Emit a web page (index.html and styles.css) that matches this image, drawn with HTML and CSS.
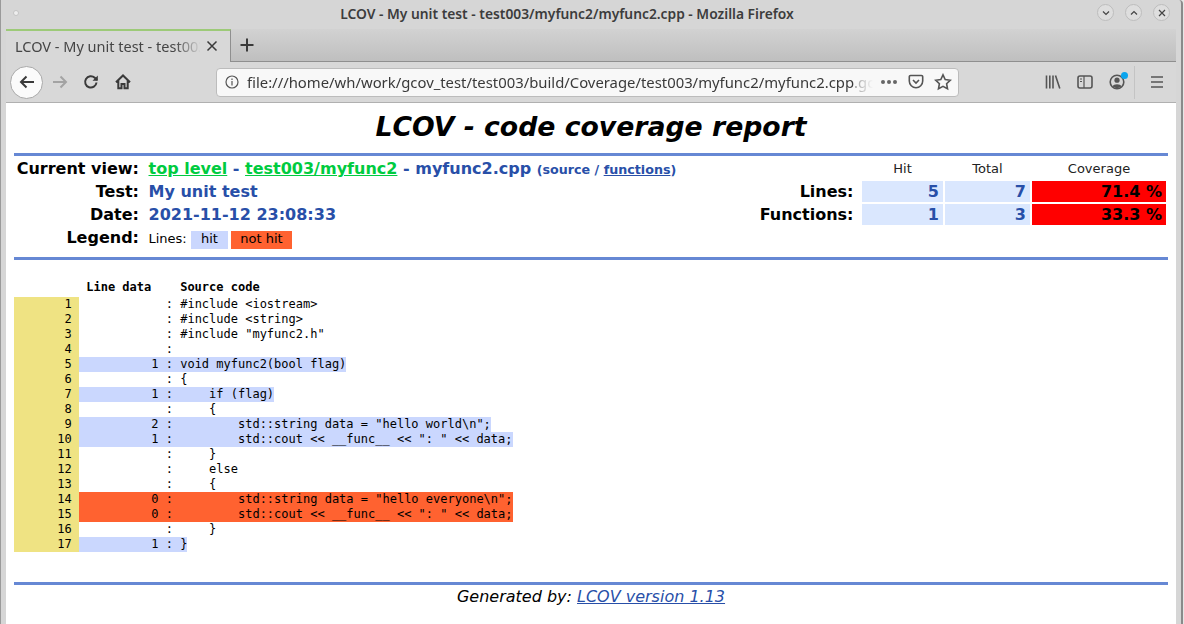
FILE: index.html
```html
<!DOCTYPE html>
<html lang="en">
<head>
<meta charset="utf-8">
<title>LCOV - My unit test - test003/myfunc2/myfunc2.cpp</title>
<link rel="stylesheet" href="styles.css">
</head>
<body>
<div class="window">
  <header class="titlebar">
    <span class="win-dot"></span>
    <div class="win-title">LCOV - My unit test - test003/myfunc2/myfunc2.cpp - Mozilla Firefox</div>
    <div class="win-buttons">
      <span class="win-btn"><svg width="10" height="10" viewBox="0 0 10 10"><path d="M2 3.500 5 6.500 8 3.500" class="ws"/></svg></span>
      <span class="win-btn"><svg width="10" height="10" viewBox="0 0 10 10"><path d="M2 6.500 5 3.500 8 6.500" class="ws"/></svg></span>
      <span class="win-btn"><svg width="10" height="10" viewBox="0 0 10 10"><path d="M2 2 8 8M8 2 2 8" class="ws"/></svg></span>
    </div>
  </header>
  <div class="tabbar">
    <div class="tab">
      <span class="tab-text">LCOV - My unit test - test003/myfunc2/myfunc2.cpp</span>
      <svg class="tab-close" width="12" height="12" viewBox="0 0 12 12"><path d="M1.500 1.500 10.500 10.500M10.500 1.500 1.500 10.500" class="ic"/></svg>
    </div>
    <svg class="newtab" width="16" height="16" viewBox="0 0 16 16"><path d="M8 1.500V14.500M1.500 8H14.500" class="ic2"/></svg>
  </div>
  <nav class="navbar">
    <span class="back"><svg width="18" height="18" viewBox="0 0 18 18"><path d="M16 9H3M8.500 3.500 3 9 8.500 14.500" class="ic2"/></svg></span>
    <svg class="forward" width="18" height="18" viewBox="0 0 18 18"><path d="M2 9H15M9.500 3.500 15 9 9.500 14.500" class="ic2 dim"/></svg>
    <svg class="reload" width="16" height="16" viewBox="0 0 16 16"><path d="M13.500 8.500A5.700 5.700 0 1 1 11.800 3.800L14 6" class="ic2"/><path d="M14.800 1.500V6.800H9.500Z" class="fill"/></svg>
    <svg class="home" width="16" height="16" viewBox="0 0 16 16"><path d="M1 8.200 8 1.500 15 8.200M3.300 6.500V14.300H6.500V10H9.500V14.300H12.700V6.500" class="ic2"/></svg>
    <div class="urlbar">
      <svg class="info" width="14" height="14" viewBox="0 0 14 14"><circle cx="7" cy="7" r="6" class="ic3"/><path d="M7 6V10.500M7 3.500V5" class="ic3"/></svg>
      <span class="url">file:///home/wh/work/gcov_test/test003/build/Coverage/test003/myfunc2/myfunc2.cpp<span class="url-dim">.gcov.html</span></span>
      <span class="dots"><i></i><i></i><i></i></span>
      <svg class="pocket" width="16" height="16" viewBox="0 0 16 16"><path d="M2.500 1.500H13.500A1.200 1.200 0 0 1 14.700 2.700V7A6.700 6.700 0 0 1 1.300 7V2.700A1.200 1.200 0 0 1 2.500 1.500Z M5 6 8 9 11 6" class="ic3 thick"/></svg>
      <svg class="star" width="18" height="18" viewBox="0 0 18 18"><path d="M9 1.800 11.200 6.500 16.300 7.200 12.600 10.700 13.500 15.800 9 13.300 4.500 15.800 5.400 10.700 1.700 7.200 6.800 6.500Z" class="ic3 thick"/></svg>
    </div>
    <div class="tools">
      <svg width="16" height="16" viewBox="0 0 16 16"><path d="M1.500 1.500V14.500M4.800 1.500V14.500M8 1.500V14.500M10.500 1.500 14.800 14.500" class="ic3 thick"/></svg>
      <svg width="16" height="16" viewBox="0 0 16 16"><rect x="1" y="2" width="14" height="12" rx="2" class="ic3 thick"/><path d="M7 2V14M3 5H5M3 7.500H5" class="ic3"/></svg>
      <span class="account"><svg width="16" height="16" viewBox="0 0 16 16"><circle cx="8" cy="8" r="6.800" class="ic3 thick"/><circle cx="8" cy="6.200" r="2.600" class="fill2"/><path d="M3.500 12.500C4.500 9.500 11.500 9.500 12.500 12.500L8 14.500Z" class="fill2"/></svg><span class="badge"></span></span>
      <span class="sep"></span>
      <svg width="14" height="14" viewBox="0 0 14 14"><path d="M1 2H13M1 7H13M1 12H13" class="ic3 thick"/></svg>
    </div>
  </nav>
  <main class="page">
    <h1 class="report-title">LCOV - code coverage report</h1>
    <hr class="rule">
    <section class="summary">
      <div class="lbl">Current view:</div>
      <div class="val"><a class="crumb" href="#">top level</a> - <a class="crumb" href="#">test003/myfunc2</a> - myfunc2.cpp <span class="sub">(source / <a class="sublink" href="#">functions</a>)</span></div>
      <div></div>
      <div class="colhead">Hit</div><div class="colhead">Total</div><div class="colhead">Coverage</div>

      <div class="lbl">Test:</div>
      <div class="val">My unit test</div>
      <div class="lbl lbl-right">Lines:</div>
      <div class="num">5</div><div class="num">7</div><div class="pct">71.4 %</div>

      <div class="lbl">Date:</div>
      <div class="val">2021-11-12 23:08:33</div>
      <div class="lbl lbl-right">Functions:</div>
      <div class="num">1</div><div class="num">3</div><div class="pct">33.3 %</div>

      <div class="lbl">Legend:</div>
      <div class="legend">Lines: <span class="chip chip-hit">hit</span> <span class="chip chip-miss">not hit</span></div>
    </section>
    <hr class="rule rule-mid">
<pre class="heading">          Line data    Source code</pre>
<pre class="source"><span class="ln">       1 </span>            : #include &lt;iostream&gt;
<span class="ln">       2 </span>            : #include &lt;string&gt;
<span class="ln">       3 </span>            : #include "myfunc2.h"
<span class="ln">       4 </span>            : 
<span class="ln">       5 </span><span class="cov">          1 : void myfunc2(bool flag)</span>
<span class="ln">       6 </span>            : {
<span class="ln">       7 </span><span class="cov">          1 :     if (flag)</span>
<span class="ln">       8 </span>            :     {
<span class="ln">       9 </span><span class="cov">          2 :         std::string data = "hello world\n";</span>
<span class="ln">      10 </span><span class="cov">          1 :         std::cout &lt;&lt; __func__ &lt;&lt; ": " &lt;&lt; data;</span>
<span class="ln">      11 </span>            :     }
<span class="ln">      12 </span>            :     else
<span class="ln">      13 </span>            :     {
<span class="ln">      14 </span><span class="nocov">          0 :         std::string data = "hello everyone\n";</span>
<span class="ln">      15 </span><span class="nocov">          0 :         std::cout &lt;&lt; __func__ &lt;&lt; ": " &lt;&lt; data;</span>
<span class="ln">      16 </span>            :     }
<span class="ln">      17 </span><span class="cov">          1 : }</span></pre>
    <hr class="rule rule-foot">
    <footer class="versioninfo">Generated by: <a href="#">LCOV version 1.13</a></footer>
  </main>
</div>
</body>
</html>
```
FILE: styles.css
```css
* { box-sizing: border-box; }
html, body { margin: 0; height: 100%; overflow: hidden; background: #e6e6e6; }
.window {
  height: 624px;
  width: 1183px;
  display: flex;
  flex-direction: column;
  padding: 0 5px;
  background: #d6d6d6;
  border-left: 1px solid #9a9a9a;
  border-right: 2px solid #8a8a8a;
  border-top-right-radius: 4px;
  font-family: "Noto Sans", sans-serif;
  color: #333;
  overflow: hidden;
}

/* title bar */
.titlebar { height: 29px; flex: none; display: flex; align-items: center; position: relative; }
.win-dot { width: 6px; height: 6px; border-radius: 50%; background: #eee; border: 1px solid #c4c4c4; margin: -4px 0 0 7px; }
.win-title { flex: 1; text-align: center; font-size: 13.800px; font-weight: 600; color: #3c3c3c; padding: 0 0 2px 18px; }
.win-buttons { display: flex; gap: 11px; margin-right: 6px; margin-top: -4px; }
.win-btn { width: 17px; height: 17px; border-radius: 50%; background: #dedede; border: 1px solid #bcbcbc; display: flex; align-items: center; justify-content: center; }
.ws { fill: none; stroke: #444; stroke-width: 1.200; }

/* tabs */
.tabbar { height: 33px; flex: none; display: flex; align-items: stretch; background: linear-gradient(#d2d2d2, #bfbfbf); border-bottom: 1px solid #8f8f8f; }
.tab { width: 225px; height: 33px; flex: none; background: #d8d8d8; border-top: 2px solid #9dca78; border-right: 1px solid #8f8f8f; display: flex; align-items: center; padding: 0 12px 2px 9px; }
.tab-text { flex: 1; font-size: 14.500px; color: #454545; white-space: nowrap; overflow: hidden; -webkit-mask-image: linear-gradient(90deg, #000 160px, transparent 186px); mask-image: linear-gradient(90deg, #000 160px, transparent 186px); }
.tab-close { margin-left: 6px; }
.newtab { margin: 8px 0 0 8px; }
.ic { fill: none; stroke: #3a3a3a; stroke-width: 1.500; }
.ic2 { fill: none; stroke: #3a3a3a; stroke-width: 2; }
.ic2.dim { stroke: #a3a3a3; }
.ic3 { fill: none; stroke: #555; stroke-width: 1.200; }
.thick { stroke-width: 1.600; }
.fill { fill: #3a3a3a; }
.fill2 { fill: #555; }

/* nav */
.navbar { height: 41px; flex: none; display: flex; align-items: center; background: #d8d8d8; border-bottom: 1px solid #b0b0b0; padding: 0 0 0 4px; }
.back { width: 33px; height: 33px; flex: none; border-radius: 50%; background: #fbfbfb; border: 1px solid #a9a9a9; display: flex; align-items: center; justify-content: center; }
.forward { margin-left: 8px; flex: none; }
.reload { margin-left: 14px; flex: none; }
.home { margin-left: 16px; flex: none; }
.urlbar { width: 743px; height: 29px; margin-left: 85px; flex: none; background: #f8f8f8; border: 1px solid #bcbcbc; border-radius: 4px; display: flex; align-items: center; padding: 0 5px 0 8px; }
.info { flex: none; }
.url { margin-left: 8px; width: 626px; flex: none; overflow: hidden; white-space: nowrap; font-size: 14.850px; color: #3a3a3a; -webkit-mask-image: linear-gradient(90deg, #000 608px, transparent 626px); mask-image: linear-gradient(90deg, #000 608px, transparent 626px); }
.url-dim { color: #a0a0a0; }
.dots { display: flex; gap: 2px; margin-left: 8px; flex: none; }
.dots i { width: 4px; height: 4px; border-radius: 50%; background: #666; }
.pocket { margin-left: 11px; flex: none; }
.star { margin-left: 10px; flex: none; }
.tools { display: flex; align-items: center; gap: 16px; margin-left: 86px; }
.account { position: relative; display: flex; }
.badge { position: absolute; top: -2px; right: -3px; width: 7px; height: 7px; border-radius: 50%; background: #0aa5ee; }
.sep { width: 1px; height: 33px; background: #c4c4c4; margin: 0 -1px 0 -7px; }

/* page */
.page { flex: 1; background: #fff; padding: 0 8px; min-height: 0; font-family: "DejaVu Sans", sans-serif; color: #000; overflow: hidden; }
.report-title { margin: 6px 0 9px; height: 35px; line-height: 35px; text-align: center; font-size: 26.700px; font-weight: bold; font-style: italic; }
.rule { height: 3px; margin: 0; border: 0; background: #6688d4; }
.rule-mid { margin-top: 9px; }
.rule-foot { margin-top: 30px; }

.summary { display: grid; grid-template-columns: 125px minmax(0, 1fr) 208px 81px 85px 134px; grid-auto-rows: 21px; column-gap: 2px; row-gap: 2px; margin: 2px 2px 0 0; align-items: center; }
.lbl { text-align: right; font-size: 16px; font-weight: bold; white-space: nowrap; }
.lbl-right { padding-right: 6.500px; }
.val { font-size: 16px; font-weight: bold; color: #284fa8; white-space: nowrap; padding-left: 7.500px; }
.crumb { color: #00cb40; }
.sub { font-size: 12.700px; }
.sublink { color: #284fa8; }
.colhead { text-align: center; font-size: 13px; color: #222; }
.num, .pct { align-self: stretch; text-align: right; font-size: 16px; font-weight: bold; line-height: 21px; padding-right: 4px; }
.num { background: #dae7fe; color: #284fa8; }
.pct { background: #ff0000; color: #000; }
.legend { grid-column: 2; font-size: 13px; padding: 4px 0 0 7.500px; white-space: nowrap; }
.chip { display: inline-block; height: 18px; line-height: 16px; text-align: center; }
.chip-hit { width: 37px; background: #cad7fe; }
.chip-miss { width: 61px; background: #ff6230; margin-left: -1px; }

pre { margin: 0; font-family: "DejaVu Sans Mono", monospace; font-size: 12px; line-height: 15px; }
.heading { font-weight: bold; margin-top: 20px; height: 17px; }
.ln { display: inline-block; height: 15px; background: #efe383; }
.cov, .nocov { display: inline-block; height: 15px; }
.cov { background: #cad7fe; }
.nocov { background: #ff6230; }

.versioninfo { text-align: center; font-size: 16px; font-style: italic; margin-top: 2px; line-height: 20px; }
.versioninfo a { color: #284fa8; }
```
